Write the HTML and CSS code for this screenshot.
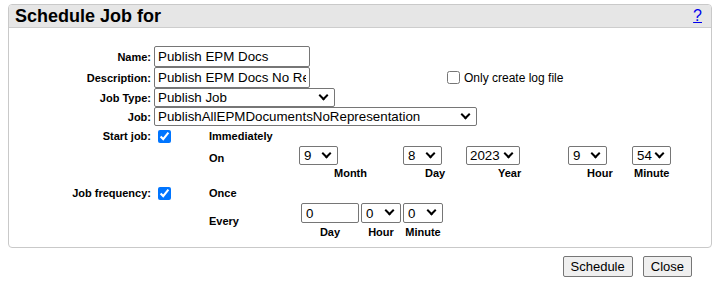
FILE: index.html
```html
<!DOCTYPE html>
<html lang="en">
<head>
  <meta charset="UTF-8">
  <title>Schedule Job</title>
  <link rel="stylesheet" href="styles.css">
</head>
<body>

  <div class="panel">
    <div class="panel-head">
      <span class="panel-title">Schedule Job for</span>
      <a href="#" class="help">?</a>
    </div>

    <div class="panel-body">
      <div class="row r-input">
        <label class="lbl">Name:</label>
        <input type="text" class="txt" value="Publish EPM Docs">
      </div>

      <div class="row r-input">
        <label class="lbl">Description:</label>
        <input type="text" class="txt" value="Publish EPM Docs No Representation">
        <label class="logopt"><input type="checkbox" class="chk">Only create log file</label>
      </div>

      <div class="row r-sel">
        <label class="lbl">Job Type:</label>
        <span class="selwrap"><select class="sel sel-type"><option>Publish Job</option></select></span>
      </div>

      <div class="row r-sel">
        <label class="lbl">Job:</label>
        <span class="selwrap"><select class="sel sel-job"><option>PublishAllEPMDocumentsNoRepresentation</option></select></span>
      </div>

      <!-- start job -->
      <div class="row r-check">
        <span class="lbl">Start job:</span>
        <span class="chk-cell"><input type="checkbox" class="chk" checked></span>
        <span class="opt">Immediately</span>
      </div>

      <div class="row r-on">
        <span class="lbl"></span>
        <span class="chk-cell"></span>
        <span class="opt">On</span>
        <div class="date-fields">
          <div class="field f-month">
            <span class="selwrap"><select class="sel sel-sm"><option>9</option></select></span>
            <span class="cap">Month</span>
          </div>
          <div class="field f-day">
            <span class="selwrap"><select class="sel sel-sm"><option>8</option></select></span>
            <span class="cap">Day</span>
          </div>
          <div class="field f-year">
            <span class="selwrap"><select class="sel sel-year"><option>2023</option></select></span>
            <span class="cap">Year</span>
          </div>
          <div class="field f-hour">
            <span class="selwrap"><select class="sel sel-sm"><option>9</option></select></span>
            <span class="cap">Hour</span>
          </div>
          <div class="field f-minute">
            <span class="selwrap"><select class="sel sel-sm"><option>54</option></select></span>
            <span class="cap">Minute</span>
          </div>
        </div>
      </div>

      <!-- frequency -->
      <div class="row r-check">
        <span class="lbl">Job frequency:</span>
        <span class="chk-cell"><input type="checkbox" class="chk" checked></span>
        <span class="opt">Once</span>
      </div>

      <div class="row r-every">
        <span class="lbl"></span>
        <span class="chk-cell"></span>
        <span class="opt">Every</span>
        <div class="every-fields">
          <div class="efield">
            <input type="text" class="txt txt-day" value="0">
            <span class="cap">Day</span>
          </div>
          <div class="efield">
            <span class="selwrap"><select class="sel sel-sm sel-e"><option>0</option></select></span>
            <span class="cap">Hour</span>
          </div>
          <div class="efield">
            <span class="selwrap"><select class="sel sel-sm sel-e"><option>0</option></select></span>
            <span class="cap">Minute</span>
          </div>
        </div>
      </div>
    </div>
  </div>

  <div class="actions">
    <button class="btn">Schedule</button>
    <button class="btn">Close</button>
  </div>

</body>
</html>
```

FILE: styles.css
```css
/* Base */
body {
  margin: 4px 8px;
  font-family: "Liberation Sans", Arial, sans-serif;
  color: #000;
  background: #fff;
}

/* Panel */
.panel {
  border: 1px solid #c9c9c9;
  border-radius: 4px;
}

.panel-head {
  display: flex;
  align-items: center;
  justify-content: space-between;
  height: 22px;
  padding: 0 9px 0 6px;
  background-color: #e6e6e6;
  border-bottom: 1px solid #cdcdcd;
  border-radius: 3px 3px 0 0;
}

.panel-title {
  font-size: 18px;
  font-weight: bold;
  line-height: 22px;
}

.help {
  font-size: 16px;
  line-height: 22px;
  color: #0000ee;
}

.panel-body {
  padding: 18px 0 8px;
}

/* Rows */
.row {
  display: flex;
  align-items: center;
}

.r-input { height: 21px; }
.r-sel { height: 19px; }
.r-check { height: 20px; }
.r-on { height: 37px; align-items: flex-start; }
.r-every { height: 36px; align-items: flex-start; }

.lbl {
  flex: none;
  width: 142px;
  margin-right: 3px;
  text-align: right;
  font-size: 11px;
  font-weight: bold;
}

.chk-cell {
  flex: none;
  width: 55px;
  display: flex;
  align-items: center;
}

.opt {
  flex: none;
  width: 90px;
  font-size: 11px;
  font-weight: bold;
  line-height: 20px;
}

.r-on .opt { margin-top: 2px; }
.r-every .opt { margin-top: 8px; }

/* Controls */
.txt {
  box-sizing: border-box;
  width: 156px;
  height: 21px;
  margin: 0;
  padding: 0 3px;
  border: 1px solid #767676;
  border-radius: 2px;
  font-family: "Liberation Sans", Arial, sans-serif;
  font-size: 13.333px;
  color: #000;
  outline: none;
}

.chk {
  width: 13px;
  height: 13px;
  margin: 0 0 0 4px;
}

.logopt {
  display: flex;
  align-items: center;
  margin-left: 137px;
  font-size: 12px;
}

.logopt .chk {
  margin: 0 4px 0 0;
}

.selwrap {
  position: relative;
  display: inline-block;
  line-height: 0;
}

/* chevron drawn over the select */
.selwrap::after {
  content: "";
  position: absolute;
  right: 8px;
  top: 50%;
  margin-top: -6px;
  width: 5px;
  height: 5px;
  border-right: 2px solid #000;
  border-bottom: 2px solid #000;
  transform: rotate(45deg);
  pointer-events: none;
}

.sel {
  -webkit-appearance: none;
  appearance: none;
  box-sizing: border-box;
  height: 19px;
  margin: 0;
  padding: 0 0 0 3px;
  border: 1px solid #767676;
  border-radius: 2px;
  background: #fff;
  font-family: "Liberation Sans", Arial, sans-serif;
  font-size: 13.333px;
  color: #000;
  outline: none;
}

.sel-type { width: 181px; }
.sel-job { width: 323px; }
.sel-sm { width: 39px; padding-left: 4px; }
.sel-year { width: 54px; }

/* Date fields */
.date-fields {
  display: flex;
}

.field {
  flex: none;
  display: flex;
  flex-direction: column;
  align-items: flex-start;
}

.f-month { width: 104px; }
.f-day { width: 63px; }
.f-year { width: 102px; }
.f-hour { width: 64px; }

.cap {
  margin-top: 1px;
  font-size: 11px;
  font-weight: bold;
  line-height: 14px;
}

.f-month .cap { padding-left: 35px; }
.f-day .cap { padding-left: 22px; }
.f-year .cap { padding-left: 32px; }
.f-hour .cap { padding-left: 19px; }
.f-minute .cap { padding-left: 2px; }

/* Every fields */
.every-fields {
  display: flex;
  gap: 2px;
  margin-left: 2px;
}

.efield {
  display: flex;
  flex-direction: column;
  align-items: center;
}

.efield .cap { margin-top: 2px; }

.txt-day {
  width: 58px;
  height: 20px;
  padding: 0 4px;
}

.sel-e {
  height: 20px;
  width: 40px;
}

/* Buttons */
.actions {
  display: flex;
  justify-content: flex-end;
  gap: 10px;
  margin-top: 8px;
  padding-right: 20px;
}

.btn {
  height: 21px;
  margin: 0;
  padding: 0 7px;
  border: 1px solid #767676;
  border-radius: 2px;
  background-color: #efefef;
  font-family: "Liberation Sans", Arial, sans-serif;
  font-size: 13px;
  color: #000;
}
```
